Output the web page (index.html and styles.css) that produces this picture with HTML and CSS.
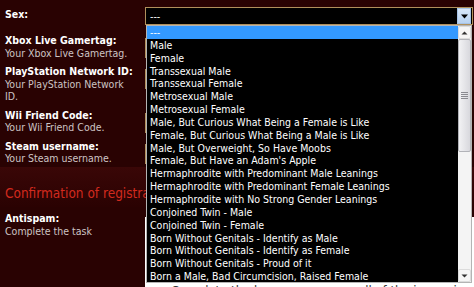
FILE: index.html
```html
<!DOCTYPE html>
<html>
<head>
<meta charset="utf-8">
<link rel="stylesheet" href="styles.css">
</head>
<body>
<div class="page">
  <div class="field field-sex">
    <div class="label-col"><div class="label">Sex:</div></div>
    <div class="control">
      <div class="select">
        <span class="select-value">---</span>
        <span class="select-btn"><svg width="9" height="5" viewBox="0 0 9 5"><path d="M1 0.5 L8 0.5 L4.5 4.5 Z" fill="#000"/></svg></span>
      </div>
      <div class="dropdown">
        <ul class="options">
          <li class="option selected">---</li>
          <li class="option">Male</li>
          <li class="option">Female</li>
          <li class="option">Transsexual Male</li>
          <li class="option">Transsexual Female</li>
          <li class="option">Metrosexual Male</li>
          <li class="option">Metrosexual Female</li>
          <li class="option">Male, But Curious What Being a Female is Like</li>
          <li class="option">Female, But Curious What Being a Male is Like</li>
          <li class="option">Male, But Overweight, So Have Moobs</li>
          <li class="option">Female, But Have an Adam's Apple</li>
          <li class="option">Hermaphrodite with Predominant Male Leanings</li>
          <li class="option">Hermaphrodite with Predominant Female Leanings</li>
          <li class="option">Hermaphrodite with No Strong Gender Leanings</li>
          <li class="option">Conjoined Twin - Male</li>
          <li class="option">Conjoined Twin - Female</li>
          <li class="option">Born Without Genitals - Identify as Male</li>
          <li class="option">Born Without Genitals - Identify as Female</li>
          <li class="option">Born Without Genitals - Proud of it</li>
          <li class="option">Born a Male, Bad Circumcision, Raised Female</li>
        </ul>
        <div class="scrollbar">
          <div class="sb-btn"><svg width="7" height="4" viewBox="0 0 7 4"><path d="M0.5 3.5 L6.5 3.5 L3.5 0.5 Z" fill="#333"/></svg></div>
          <div class="sb-thumb"><span class="grip"></span></div>
          <div class="sb-track"></div>
          <div class="sb-btn"><svg width="7" height="4" viewBox="0 0 7 4"><path d="M0.5 0.5 L6.5 0.5 L3.5 3.5 Z" fill="#333"/></svg></div>
        </div>
      </div>
    </div>
  </div>

  <div class="field field-first">
    <div class="label-col">
      <div class="label">Xbox Live Gamertag:</div>
      <div class="desc">Your Xbox Live Gamertag.</div>
    </div>
    <div class="control"><input class="text-input" type="text"></div>
  </div>

  <div class="field">
    <div class="label-col">
      <div class="label">PlayStation Network ID:</div>
      <div class="desc">Your PlayStation Network ID.</div>
    </div>
    <div class="control"><input class="text-input" type="text"></div>
  </div>

  <div class="field">
    <div class="label-col">
      <div class="label">Wii Friend Code:</div>
      <div class="desc">Your Wii Friend Code.</div>
    </div>
    <div class="control"><input class="text-input" type="text"></div>
  </div>

  <div class="field">
    <div class="label-col">
      <div class="label">Steam username:</div>
      <div class="desc">Your Steam username.</div>
    </div>
    <div class="control"><input class="text-input" type="text"></div>
  </div>

  <div class="section-head">Confirmation of registration</div>

  <div class="field field-antispam">
    <div class="label-col">
      <div class="label">Antispam:</div>
      <div class="desc">Complete the task</div>
    </div>
    <div class="control">
      <div class="captcha">Complete the boxes so you see all of the image in order</div>
    </div>
  </div>
</div>
</body>
</html>
```

FILE: styles.css
```css
html, body {
  margin: 0;
  padding: 0;
}
body {
  background: #290202;
  color: #fff;
  font-family: "DejaVu Sans Condensed", "DejaVu Sans", sans-serif;
  font-size: 10.5px;
}
.page {
  width: 474px;
  height: 287px;
  overflow: hidden;
}
.field {
  display: flex;
  margin-top: 6px;
}
.field-sex {
  margin-top: 0;
  padding-top: 7px;
}
.field-first {
  margin-top: 9px;
}
.label-col {
  width: 128px;
  padding-left: 5px;
  padding-right: 12px;
  flex: none;
}
.field-sex .label-col {
  padding-top: 1px;
}
.label {
  font-weight: bold;
  line-height: 12.5px;
  white-space: nowrap;
}
.field-sex .label {
  line-height: 13px;
}
.desc {
  color: #cdc4c4;
  line-height: 12.5px;
}
.control {
  position: relative;
  flex: 1;
  margin-right: 1px;
}
.select {
  height: 16px;
  border: 1px solid #b0905c;
  background: #000;
  display: flex;
  align-items: center;
  justify-content: space-between;
}
.select-value {
  padding-left: 4px;
  color: #fff;
}
.select-btn {
  width: 14px;
  height: 16px;
  margin-right: 1px;
  box-sizing: border-box;
  border: 1px solid #a7c4e6;
  background: linear-gradient(#d9e8f8, #b8d3f1);
  display: flex;
  align-items: center;
  justify-content: center;
}
.dropdown {
  position: absolute;
  top: 18px;
  left: 1px;
  width: 326px;
  height: 258px;
  box-sizing: border-box;
  border: 1px solid #b4b4b4;
  background: #000;
  display: flex;
  z-index: 5;
}
.options {
  list-style: none;
  margin: 0;
  padding: 0;
  flex: 1;
  overflow: hidden;
}
.option {
  line-height: 12.85px;
  height: 12.85px;
  padding-left: 3px;
  white-space: nowrap;
  color: #fff;
}
.option.selected {
  background: #3399ff;
}
.scrollbar {
  width: 13px;
  flex: none;
  display: flex;
  flex-direction: column;
  background: #f2f2f2;
}
.sb-btn {
  height: 13px;
  box-sizing: border-box;
  border: 1px solid #dcdcdc;
  border-radius: 2px;
  background: #f6f6f6;
  display: flex;
  align-items: center;
  justify-content: center;
}
.sb-thumb {
  height: 113px;
  box-sizing: border-box;
  border: 1px solid #b2b3b8;
  border-radius: 2px;
  background: linear-gradient(to right, #f2f2f4, #d8d8dd);
  display: flex;
  align-items: center;
  justify-content: center;
}
.grip {
  width: 7px;
  height: 7px;
  background: repeating-linear-gradient(#8a8a90 0 1px, transparent 1px 2px);
}
.sb-track {
  flex: 1;
  background: #f4f4f4;
}
.text-input {
  width: 300px;
  height: 16px;
  margin: 4px 0 0 0;
  border: 1px solid #b0905c;
  background: #000;
}
.section-head {
  margin-top: 2.5px;
  padding: 16px 0 4px 5px;
  font-size: 13.5px;
  line-height: 20px;
  color: #d22a1e;
  white-space: nowrap;
  background: linear-gradient(#3a0707, #2a0202);
}
.field-antispam {
  margin-top: 5px;
}
.field-antispam .control {
  padding-top: 5px;
  margin-right: 0;
}
.captcha {
  height: 80px;
  width: 340px;
  box-sizing: border-box;
  background: #fff;
  color: #333;
  font-size: 13px;
  line-height: 16px;
  padding: 66px 0 0 26px;
  white-space: nowrap;
}
```
